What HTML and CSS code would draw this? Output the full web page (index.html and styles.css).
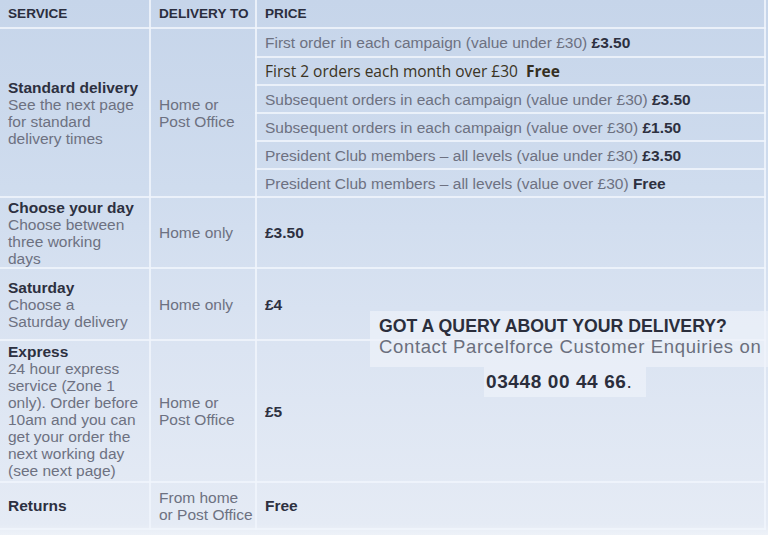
FILE: index.html
```html
<!DOCTYPE html>
<html>
<head>
<meta charset="utf-8">
<link rel="stylesheet" href="styles.css">
</head>
<body>
<div class="page">
<table class="rates">
  <colgroup>
    <col class="c1"><col class="c2"><col class="c3">
  </colgroup>
  <thead>
    <tr class="head"><th>SERVICE</th><th>DELIVERY TO</th><th>PRICE</th></tr>
  </thead>
  <tbody>
    <tr class="sub first">
      <td rowspan="6" class="svc"><b>Standard delivery</b><br>See the next page<br>for standard<br>delivery times</td>
      <td rowspan="6" class="to">Home or<br>Post Office</td>
      <td class="price">First order in each campaign (value under £30) <b>£3.50</b></td>
    </tr>
    <tr class="sub"><td class="price alt">First 2 orders each month over £30&nbsp; <b>Free</b></td></tr>
    <tr class="sub"><td class="price">Subsequent orders in each campaign (value under £30) <b>£3.50</b></td></tr>
    <tr class="sub"><td class="price">Subsequent orders in each campaign (value over £30) <b>£1.50</b></td></tr>
    <tr class="sub"><td class="price">President Club members – all levels (value under £30) <b>£3.50</b></td></tr>
    <tr class="sub last"><td class="price">President Club members – all levels (value over £30) <b>Free</b></td></tr>
    <tr class="r-day">
      <td class="svc"><b>Choose your day</b><br>Choose between<br>three working<br>days</td>
      <td class="to">Home only</td>
      <td class="price"><b>£3.50</b></td>
    </tr>
    <tr class="r-sat">
      <td class="svc"><b>Saturday</b><br>Choose a<br>Saturday delivery</td>
      <td class="to">Home only</td>
      <td class="price"><b>£4</b></td>
    </tr>
    <tr class="r-exp">
      <td class="svc"><b>Express</b><br>24 hour express<br>service (Zone 1<br>only). Order before<br>10am and you can<br>get your order the<br>next working day<br>(see next page)</td>
      <td class="to">Home or<br>Post Office</td>
      <td class="price"><b>£5</b></td>
    </tr>
    <tr class="r-ret">
      <td class="svc"><b>Returns</b></td>
      <td class="to">From home<br>or Post Office</td>
      <td class="price"><b>Free</b></td>
    </tr>
  </tbody>
</table>

<div class="query">
  <div class="q-title">GOT A QUERY ABOUT YOUR DELIVERY?</div>
  <div class="q-text">Contact Parcelforce Customer Enquiries on</div>
</div>
<div class="phone"><b>03448 00 44 66</b>.</div>
</div>
</body>
</html>
```

FILE: styles.css
```css
html, body {
  margin: 0;
  padding: 0;
}
body {
  width: 768px;
  height: 535px;
  overflow: hidden;
  background: #eef2f8;
  font-family: "Liberation Sans", Arial, sans-serif;
}
.page {
  position: relative;
  width: 768px;
  height: 535px;
  background: linear-gradient(180deg, #c6d5ea 0%, #cfdcee 35%, #dbe4f2 65%, #e5ebf5 98%, #eef2f8 100%);
}
.rates {
  border-collapse: collapse;
  width: 765px;
  table-layout: fixed;
  color: #6d7181;
  font-size: 15.5px;
  line-height: 17px;
  white-space: nowrap;
}
.c1 { width: 150px; }
.c2 { width: 106px; }
.c3 { width: 509px; }
.rates th, .rates td {
  border: 2px solid rgba(240, 245, 252, 0.85);
  padding: 0 0 0 8px;
  vertical-align: middle;
  text-align: left;
}
.rates tr > :first-child { border-left: none; }
.rates thead th { border-top: none; }
.head th {
  height: 27px;
  font-size: 13.6px;
  font-weight: bold;
  color: #2b2e3e;
}
.rates b {
  color: #2d3040;
  font-weight: bold;
}
.sub td.price { height: 26px; }
.sub.first td.price { height: 27px; }
.price.alt {
  font-family: "Open Sans", sans-serif;
  color: #3b3424;
  font-size: 15.5px;
}
.price.alt b { color: #352f22; }
.r-day td { height: 69px; }
.r-sat td { height: 70px; }
.r-exp td { height: 140px; }
.r-ret td { height: 45px; }

.query {
  position: absolute;
  left: 370px;
  top: 311px;
  width: 398px;
  height: 56px;
  background: rgba(238, 242, 249, 0.7);
  padding: 5px 0 0 9px;
  box-sizing: border-box;
  white-space: nowrap;
}
.q-title {
  font-weight: bold;
  font-size: 17.7px;
  color: #2b2e3c;
  line-height: 20px;
}
.q-text {
  font-size: 18.5px;
  color: #6b6f7d;
  line-height: 21px;
  letter-spacing: 0.65px;
}
.phone {
  position: absolute;
  left: 484px;
  top: 367px;
  width: 162px;
  height: 30px;
  background: rgba(238, 242, 249, 0.7);
  padding: 3px 0 0 2px;
  box-sizing: border-box;
  font-size: 19px;
  color: #2b2e3c;
  line-height: 23px;
  letter-spacing: 0.6px;
  white-space: nowrap;
}
.phone b { font-weight: bold; }
```
